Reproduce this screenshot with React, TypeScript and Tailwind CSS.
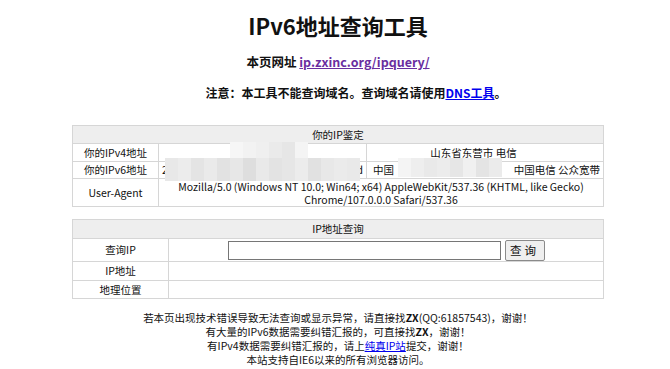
import React from 'react'

const font = "font-['Noto_Sans_CJK_SC','Noto_Sans',sans-serif]"

// grey redaction squares laid over the private parts of the addresses
function Mosaic({ shades, className }: { shades: string[]; className: string }) {
  return (
    <div className={`absolute flex ${className}`} aria-hidden="true">
      {shades.map((c, i) => (
        <div key={i} className="h-full w-[13px]" style={{ backgroundColor: c }} />
      ))}
    </div>
  )
}

const cell = 'border border-[#d6d6d6] px-[3px] leading-[12px]'

export default function App() {
  return (
    <div className={`${font} min-h-[369px] w-full overflow-hidden bg-white pl-[6px] text-[#111]`}>
      <h1 className="pt-[11px] text-center text-[22px] font-bold leading-[28px]">IPv6地址查询工具</h1>

      <p className="mt-[15px] text-center text-[12.5px] font-bold leading-[16px]">
        本页网址{' '}
        <a href="#" className="text-[#6a2ea0] underline">
          ip.zxinc.org/ipquery/
        </a>
      </p>

      <p className="mt-[15px] pl-[36px] text-center text-[12px] font-bold leading-[16px]">
        注意：本工具不能查询域名。查询域名请使用
        <a href="#" className="text-[#0000ee] underline">
          DNS工具
        </a>
        。
      </p>

      <div className="relative mx-auto mt-[24px] w-[532px] text-[10.5px]">
        <table className="w-full border-collapse">
          <tbody>
            <tr className="h-[18px] bg-[#eeeeee]">
              <td colSpan={3} className={`${cell} text-center`}>你的IP鉴定</td>
            </tr>
            <tr className="h-[18px]">
              <td className={`${cell} w-[86px] text-center`}>你的IPv4地址</td>
              <td className={`${cell} w-[208px]`}></td>
              <td className={`${cell} pr-[26px] text-center`}>山东省东营市 电信</td>
            </tr>
            <tr className="h-[17px]">
              <td className={`${cell} text-center`}>你的IPv6地址</td>
              <td className={`${cell} whitespace-nowrap`}>
                <div className="flex justify-between">
                  <span>2</span>
                  <span>d</span>
                </div>
              </td>
              <td className={`${cell} whitespace-nowrap pl-[6px]`}>
                <div className="flex justify-between">
                  <span>中国</span>
                  <span>中国电信 公众宽带</span>
                </div>
              </td>
            </tr>
            <tr className="h-[28px]">
              <td className={`${cell} text-center`}>User-Agent</td>
              <td colSpan={2} className={`${cell} text-center leading-[13px]`}>
                <div>Mozilla/5.0 (Windows NT 10.0; Win64; x64) AppleWebKit/537.36 (KHTML, like Gecko)</div>
                <div>Chrome/107.0.0.0 Safari/537.36</div>
              </td>
            </tr>
          </tbody>
        </table>

        <Mosaic
          className="left-[158px] top-[17px] h-[19px]"
          shades={['#f6f6f6', '#f2f2f2', '#efefef', '#eaeaea', '#e6e6e6', '#f4f4f4']}
        />
        <Mosaic
          className="left-[93px] top-[33px] h-[23px]"
          shades={['#e8e8e8', '#ececec', '#e4e4e4', '#eaeaea', '#e2e2e2', '#e7e7e7', '#dedede', '#e9e9e9', '#e3e3e3', '#e6e6e6', '#ececec', '#e1e1e1', '#e8e8e8', '#ebebeb', '#e9e9e9']}
        />
        <Mosaic
          className="left-[326px] top-[33px] h-[19px]"
          shades={['#f4f4f4', '#eeeeee', '#e9e9e9', '#ececec', '#e6e6e6', '#f0f0f0', '#e4e4e4', '#ebebeb']}
        />
      </div>

      <div className="mx-auto mt-[12px] w-[532px] text-[10.5px]">
        <table className="w-full border-collapse">
          <tbody>
            <tr className="h-[19px] bg-[#eeeeee]">
              <td colSpan={2} className={`${cell} text-center`}>IP地址查询</td>
            </tr>
            <tr className="h-[23px]">
              <td className={`${cell} w-[96px] text-center`}>查询IP</td>
              <td className={cell}>
                <div className="flex items-center justify-center gap-[4px]">
                  <input
                    type="text"
                    className="h-[19px] w-[273px] border border-[#767676] bg-white outline-none"
                  />
                  <button className="h-[21px] w-[40px] rounded-[2px] border border-[#8a8a8a] bg-[#efefef] text-[11.5px] tracking-[3px]">
                    查询
                  </button>
                </div>
              </td>
            </tr>
            <tr className="h-[19px]">
              <td className={`${cell} text-center`}>IP地址</td>
              <td className={cell}></td>
            </tr>
            <tr className="h-[18px]">
              <td className={`${cell} text-center`}>地理位置</td>
              <td className={cell}></td>
            </tr>
          </tbody>
        </table>
      </div>

      <div className="mt-[12px] text-center text-[10.5px] leading-[14px]">
        <p>
          若本页出现技术错误导致无法查询或显示异常，请直接找<b>ZX</b>(QQ:61857543)，谢谢！
        </p>
        <p>
          有大量的IPv6数据需要纠错汇报的，可直接找<b>ZX</b>，谢谢！
        </p>
        <p>
          有IPv4数据需要纠错汇报的，请上
          <a href="#" className="text-[#0000ee] underline">
            纯真IP站
          </a>
          提交，谢谢！
        </p>
        <p>本站支持自IE6以来的所有浏览器访问。</p>
      </div>
    </div>
  )
}
